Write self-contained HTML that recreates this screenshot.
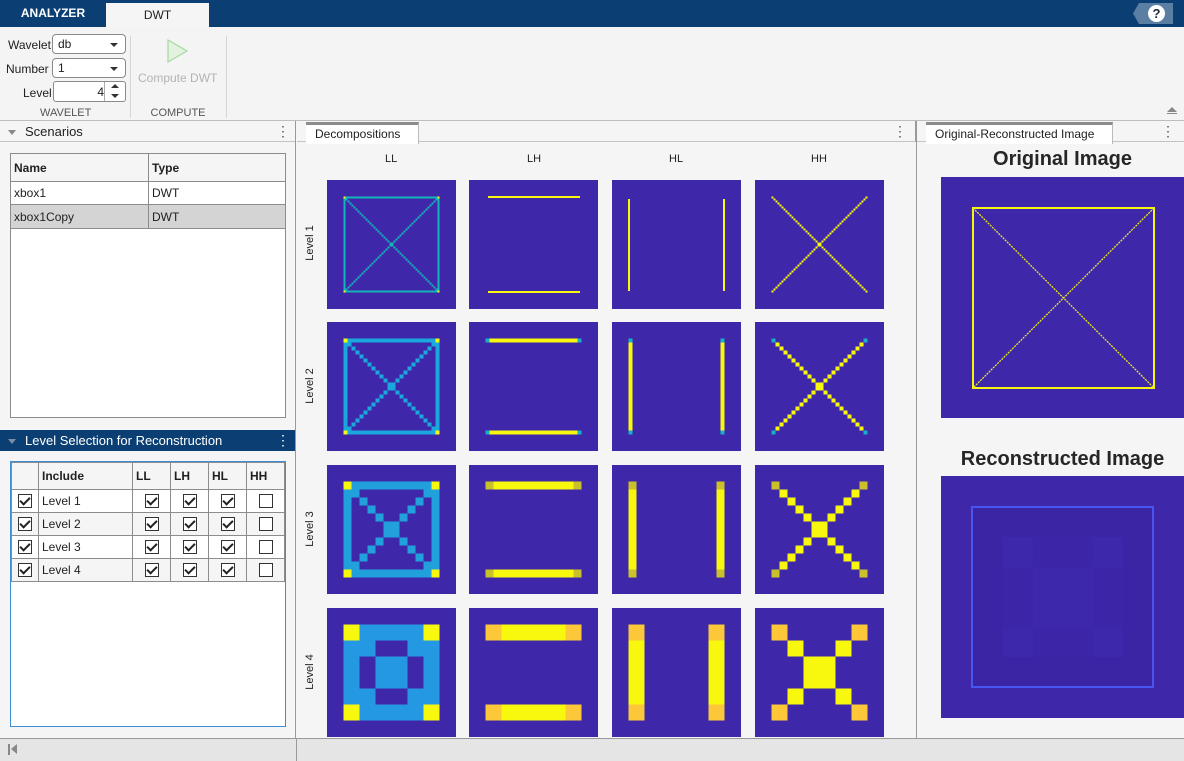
<!DOCTYPE html>
<html><head><meta charset="utf-8">
<style>
*{box-sizing:border-box;margin:0;padding:0}
body{width:1184px;height:761px;overflow:hidden;background:#f5f5f5;font-family:"Liberation Sans",Arial,sans-serif;font-size:12px;color:#212121;position:relative}
.abs{position:absolute}
.top{left:0;top:0;width:1184px;height:27px;background:#0b3f73}
.tab1{left:0;top:0;width:106px;height:27px;color:#fff;font-size:12px;line-height:27px;text-align:center;font-weight:bold;letter-spacing:0}
.tab2{left:106px;top:3px;width:103px;height:24px;background:#f5f5f5;text-align:center;line-height:24px;font-size:12px}
.help{left:1133px;top:3px;width:40px;height:21px;background:#5a7fa3;clip-path:polygon(6px 0,100% 0,100% 100%,6px 100%,0 50%)}
.q{left:1148px;top:5px;width:17px;height:17px;border-radius:50%;background:#fff;color:#1d2a38;font-weight:bold;font-size:13px;text-align:center;line-height:17px}
.strip{left:0;top:27px;width:1184px;height:94px;background:#f4f4f4;border-bottom:1px solid #bdbdbd}
.lbl{font-size:12px;color:#212121}
.dd{background:#fff;border:1px solid #8a8a8a;border-radius:4px;height:20px;font-size:12px;line-height:18px;padding-left:5px}
.dd:after{content:"";position:absolute;right:7px;top:8px;border-left:4px solid transparent;border-right:4px solid transparent;border-top:4px solid #333}
.sec{font-size:11px;color:#555;text-align:center}
.vsep{width:1px;background:#d6d6d6}
.ph{height:21px;background:#f5f5f5;border-bottom:1px solid #c4c4c4;font-size:13px;line-height:21px}
table{border-collapse:collapse;background:#fff}
td,th{border:1px solid #8c8c8c;font-size:12px;text-align:left;padding-left:3px;font-weight:normal}
th{font-weight:bold;background:#f5f5f5}
.cb{display:inline-block;width:14px;height:14px;border:1px solid #333;background:#fff;vertical-align:middle;position:relative}
.cb.c:after{content:"";position:absolute;left:3px;top:0px;width:4px;height:8px;border:solid #222;border-width:0 2px 2px 0;transform:rotate(45deg)}
.rl{font-size:11px;transform:rotate(-90deg);transform-origin:center;white-space:nowrap;width:60px;text-align:center}
</style></head><body>
<div class="abs top"></div>
<div class="abs tab1">ANALYZER</div>
<div class="abs tab2">DWT</div>
<div class="abs help"></div>
<div class="abs q">?</div>
<div class="abs strip"></div>
<div class="abs lbl" style="left:8px;top:38px">Wavelet</div>
<div class="abs dd" style="left:52px;top:34px;width:74px">db</div>
<div class="abs lbl" style="left:6px;top:62px">Number</div>
<div class="abs dd" style="left:52px;top:58px;width:74px">1</div>
<div class="abs lbl" style="left:23px;top:86px">Level</div>
<div class="abs" style="left:53px;top:81px;width:73px;height:21px;background:#fff;border:1px solid #8a8a8a;border-radius:3px"></div>
<div class="abs" style="left:80px;top:85px;width:24px;text-align:right;font-size:12px">4</div>
<div class="abs" style="left:104px;top:82px;width:1px;height:19px;background:#aaa"></div>
<div class="abs" style="left:111px;top:84px;border-left:4px solid transparent;border-right:4px solid transparent;border-bottom:4px solid #333"></div>
<div class="abs" style="left:111px;top:94px;border-left:4px solid transparent;border-right:4px solid transparent;border-top:4px solid #333"></div>
<div class="abs sec" style="left:40px;top:107px;width:50px">WAVELET</div>
<div class="abs vsep" style="left:130px;top:36px;height:82px"></div>
<svg class="abs" style="left:166px;top:38px" width="24" height="26"><path d="M2 2 L21 13 L2 24 Z" fill="#e2f2df" stroke="#a6d9a0" stroke-width="1.2"/></svg>
<div class="abs" style="left:138px;top:71px;font-size:12px;color:#b3b3b3">Compute DWT</div>
<div class="abs sec" style="left:148px;top:107px;width:60px">COMPUTE</div>
<div class="abs vsep" style="left:226px;top:36px;height:82px"></div>
<div class="abs" style="left:1167px;top:107px;border-left:5px solid transparent;border-right:5px solid transparent;border-bottom:5px solid #888"></div>
<div class="abs" style="left:1167px;top:113px;width:10px;height:1px;background:#888"></div>

<div class="abs" style="left:0;top:121px;width:296px;height:617px;background:#f5f5f5;border-right:1px solid #999"></div>
<div class="abs ph" style="left:0;top:121px;width:295px;padding-left:25px">Scenarios</div>
<div class="abs" style="left:8px;top:130px;border-left:4px solid transparent;border-right:4px solid transparent;border-top:5px solid #888"></div>
<div class="abs" style="left:276px;top:124px;font-size:14px;color:#555;line-height:14px">⋮</div>
<div class="abs" style="left:10px;top:153px;width:276px;height:265px;background:#fff;border:1px solid #8c8c8c"></div>
<table class="abs" style="left:10px;top:153px;width:276px">
<tr style="height:28px"><th style="width:138px">Name</th><th>Type</th></tr>
<tr style="height:23px"><td>xbox1</td><td>DWT</td></tr>
<tr style="height:24px;background:#d4d4d4"><td>xbox1Copy</td><td>DWT</td></tr>
</table>
<div class="abs" style="left:0;top:430px;width:295px;height:21px;background:#0b3f73;color:#fff;font-size:13px;line-height:21px;padding-left:25px">Level Selection for Reconstruction</div>
<div class="abs" style="left:8px;top:439px;border-left:4px solid transparent;border-right:4px solid transparent;border-top:5px solid #7a8ea8"></div>
<div class="abs" style="left:276px;top:433px;font-size:14px;color:#fff;line-height:14px">⋮</div>
<div class="abs" style="left:10px;top:461px;width:276px;height:266px;background:#fff;border:1px solid #3a8fd8"></div>
<table class="abs" style="left:11px;top:462px;width:274px">
<tr style="height:27px"><th style="width:27px"></th><th style="width:94px">Include</th><th style="width:38px">LL</th><th style="width:38px">LH</th><th style="width:38px">HL</th><th>HH</th></tr>
<tr style="height:23px"><td style="text-align:center;padding:0"><span class="cb c"></span></td><td>Level 1</td><td style="text-align:center;padding:0"><span class="cb c"></span></td><td style="text-align:center;padding:0"><span class="cb c"></span></td><td style="text-align:center;padding:0"><span class="cb c"></span></td><td style="text-align:center;padding:0"><span class="cb"></span></td></tr>
<tr style="height:23px;background:#f5f5f5"><td style="text-align:center;padding:0"><span class="cb c"></span></td><td>Level 2</td><td style="text-align:center;padding:0"><span class="cb c"></span></td><td style="text-align:center;padding:0"><span class="cb c"></span></td><td style="text-align:center;padding:0"><span class="cb c"></span></td><td style="text-align:center;padding:0"><span class="cb"></span></td></tr>
<tr style="height:23px"><td style="text-align:center;padding:0"><span class="cb c"></span></td><td>Level 3</td><td style="text-align:center;padding:0"><span class="cb c"></span></td><td style="text-align:center;padding:0"><span class="cb c"></span></td><td style="text-align:center;padding:0"><span class="cb c"></span></td><td style="text-align:center;padding:0"><span class="cb"></span></td></tr>
<tr style="height:23px;background:#f5f5f5"><td style="text-align:center;padding:0"><span class="cb c"></span></td><td>Level 4</td><td style="text-align:center;padding:0"><span class="cb c"></span></td><td style="text-align:center;padding:0"><span class="cb c"></span></td><td style="text-align:center;padding:0"><span class="cb c"></span></td><td style="text-align:center;padding:0"><span class="cb"></span></td></tr>
</table>

<div class="abs ph" style="left:297px;top:121px;width:619px;border-right:1px solid #999"></div>
<div class="abs" style="left:306px;top:122px;width:113px;height:22px;background:#fff;border-top:3px solid #8c8c8c;border-right:1px solid #bbb;font-size:12px;line-height:19px;padding-left:9px">Decompositions</div>
<div class="abs" style="left:893px;top:124px;font-size:14px;color:#555;line-height:14px">⋮</div>
<div class="abs" style="left:916px;top:121px;width:1px;height:617px;background:#999"></div>
<div class="abs" style="left:385px;top:153px;font-size:11px">LL</div>
<div class="abs" style="left:527px;top:153px;font-size:11px">LH</div>
<div class="abs" style="left:669px;top:153px;font-size:11px">HL</div>
<div class="abs" style="left:811px;top:153px;font-size:11px">HH</div>
<div class="abs rl" style="left:280px;top:237px">Level 1</div>
<div class="abs rl" style="left:280px;top:380px">Level 2</div>
<div class="abs rl" style="left:280px;top:523px">Level 3</div>
<div class="abs rl" style="left:280px;top:666px">Level 4</div>
<div id="tiles"></div>

<div class="abs ph" style="left:917px;top:121px;width:267px"></div>
<div class="abs" style="left:926px;top:122px;width:187px;height:22px;background:#fff;border-top:3px solid #8c8c8c;border-right:1px solid #bbb;font-size:12px;line-height:19px;padding-left:9px">Original-Reconstructed Image</div>
<div class="abs" style="left:1161px;top:124px;font-size:14px;color:#555;line-height:14px">⋮</div>
<div class="abs" style="left:941px;top:148px;width:243px;text-align:center;font-size:20px;font-weight:bold;color:#262626">Original Image</div>
<svg class="abs" style="left:941px;top:177px" width="243" height="241">
<rect width="243" height="241" fill="#3e27a8"/>
<rect x="32" y="31" width="181" height="180" fill="none" stroke="#f5f511" stroke-width="2"/>
<line x1="32" y1="31" x2="213" y2="211" stroke="#e8e820" stroke-width="1.3" stroke-dasharray="2 1"/>
<line x1="213" y1="31" x2="32" y2="211" stroke="#e8e820" stroke-width="1.3" stroke-dasharray="2 1"/>
</svg>
<div class="abs" style="left:941px;top:448px;width:243px;text-align:center;font-size:20px;font-weight:bold;color:#262626">Reconstructed Image</div>
<svg class="abs" style="left:941px;top:476px" width="243" height="242">
<rect width="243" height="242" fill="#3e27a8"/>
<rect x="32" y="31" width="180" height="180" fill="#3b25a5"/>
<rect x="62" y="61" width="120" height="120" fill="#3c26a7"/>
<rect x="92" y="91" width="60" height="60" fill="#3d27aa"/>
<rect x="62" y="61" width="30" height="30" fill="#3d28ab"/>
<rect x="152" y="61" width="30" height="30" fill="#3d28ab"/>
<rect x="62" y="151" width="30" height="30" fill="#3d28ab"/>
<rect x="152" y="151" width="30" height="30" fill="#3d28ab"/>
<rect x="31" y="31" width="181" height="180" fill="none" stroke="#4756f2" stroke-width="2"/>
</svg>

<div class="abs" style="left:0;top:738px;width:1184px;height:23px;background:#e5e5e5;border-top:1px solid #999"></div>
<div class="abs" style="left:296px;top:738px;width:1px;height:23px;background:#999"></div>
<div class="abs" style="left:8px;top:744px;width:2px;height:11px;background:#888"></div>
<div class="abs" style="left:11px;top:744px;border-top:5.5px solid transparent;border-bottom:5.5px solid transparent;border-right:6px solid #888"></div>

<script>
var BG="#3e27a8",Y="#f8f80f",O="#fcc83a",OL="#c9c02a";
var cols=[327,469,612,755],rows=[180,322,465,608];
function tile(x,y,cells){
  var s='<svg class="abs" style="left:'+x+'px;top:'+y+'px" width="129" height="129"><rect width="129" height="129" fill="'+BG+'"/>';
  cells.forEach(function(c){s+='<rect x="'+c[0]+'" y="'+c[1]+'" width="'+c[2]+'" height="'+c[3]+'" fill="'+c[4]+'"/>';});
  return s+'</svg>';
}
var out='';
for(var L=1;L<=4;L++){
  var n=[48,24,12,6][L-1],cs=96/n,o=16.5,y=rows[L-1];
  var blue=["#13b5b8","#1aa7dd","#22a0db","#2598e4"][L-1];
  var endc=["#f8f80f","#18b0c8",OL,O][L-1];
  var C=function(i,j,col,w,h){return [o+i*cs,o+j*cs,(w||1)*cs,(h||1)*cs,col];};
  var a=[];
  if(L<4){
    a.push(C(0,0,blue,n,1));a.push(C(0,n-1,blue,n,1));a.push(C(0,0,blue,1,n));a.push(C(n-1,0,blue,1,n));
    for(var k=1;k<n-1;k++){a.push(C(k,k,blue));a.push(C(n-1-k,k,blue));}
    a.push(C(0,0,Y));a.push(C(n-1,0,Y));a.push(C(0,n-1,Y));a.push(C(n-1,n-1,Y));
  } else {
    a.push(C(0,0,blue,6,6));a.push(C(2,1,BG,2,1));a.push(C(2,4,BG,2,1));a.push(C(1,2,BG,1,2));a.push(C(4,2,BG,1,2));
    a.push(C(0,0,Y));a.push(C(5,0,Y));a.push(C(0,5,Y));a.push(C(5,5,Y));
  }
  out+=tile(cols[0],y,a);
  a=[C(0,0,Y,n,1),C(0,n-1,Y,n,1),C(0,0,endc),C(n-1,0,endc),C(0,n-1,endc),C(n-1,n-1,endc)];
  if(L==1){a=[[19,16,92,2,Y],[19,111,92,2,Y]];}
  out+=tile(cols[1],y,a);
  a=[C(0,0,Y,1,n),C(n-1,0,Y,1,n),C(0,0,endc),C(n-1,0,endc),C(0,n-1,endc),C(n-1,n-1,endc)];
  if(L==1){a=[[16,19,2,92,Y],[111,19,2,92,Y]];}
  out+=tile(cols[2],y,a);
  a=[];
  for(var k=0;k<n;k++){var col=(k==0||k==n-1)?endc:Y;if(L==1)col=Y;a.push(C(k,k,col));a.push(C(n-1-k,k,col));}
  out+=tile(cols[3],y,a);
}
document.getElementById('tiles').innerHTML=out;
</script>
</body></html>
